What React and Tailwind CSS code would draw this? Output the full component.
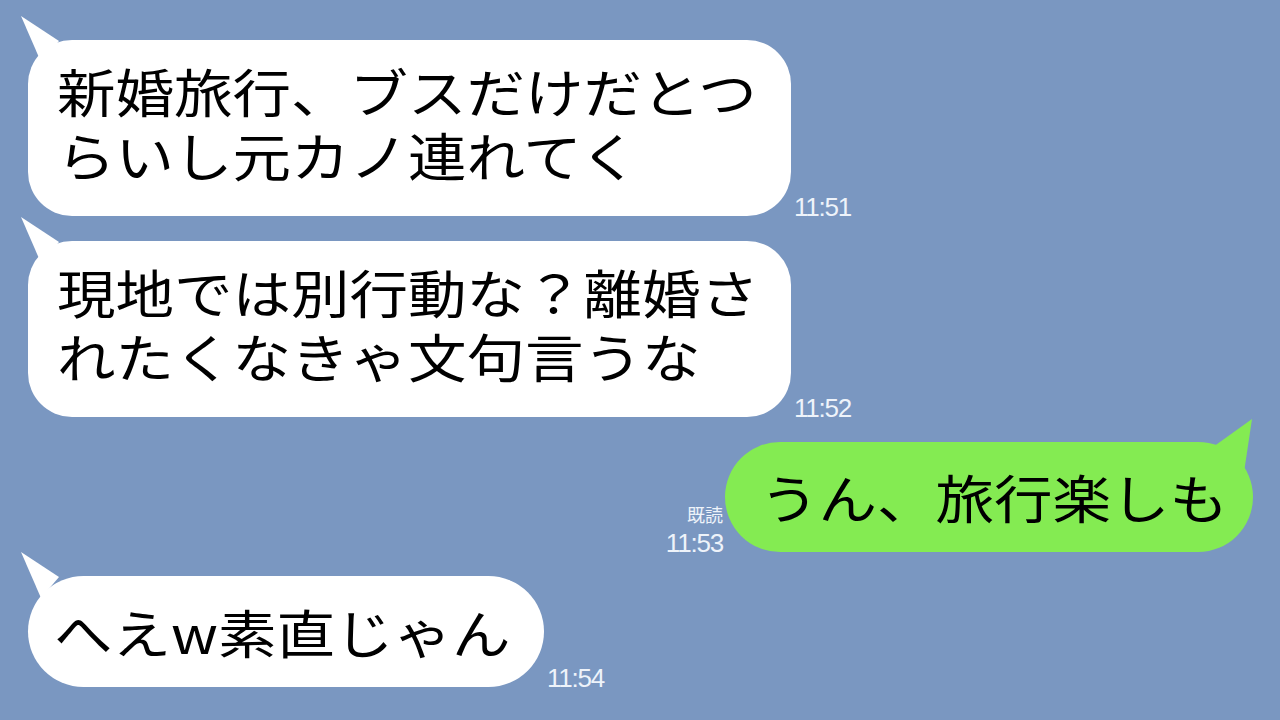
import React from "react";

const JP = { fontFamily: '"Noto Sans CJK JP", "Noto Sans", sans-serif' };
const TIME = { fontFamily: '"Liberation Sans", Arial, sans-serif' };

const LeftTail = () => (
  <svg className="absolute left-[-7px] top-[-24px]" width="40" height="50" viewBox="0 0 40 50">
    <polygon points="0,0 20,46 38,25" fill="#ffffff" />
  </svg>
);

const Stamp = ({ children, read }) => (
  <div className="flex flex-col items-end leading-none text-[#eef3fa]">
    {read && (
      <span className="text-[18px] mb-[7px]" style={JP}>
        既読
      </span>
    )}
    <span className="text-[26px] tracking-[-1.2px] mb-[-4px]" style={TIME}>
      {children}
    </span>
  </div>
);

const LeftMsg = ({ lines, time }) => (
  <div className="flex items-end gap-[3px]">
    <div
      className="relative bg-white rounded-[44px] w-[763px] pl-[29px] pt-[19px] pb-[29px] text-black text-[52px] leading-[64px]"
      style={JP}
    >
      <LeftTail />
      {lines.map((l, i) => (
        <div key={i} className="whitespace-nowrap relative origin-left scale-x-[1.125]">
          {l}
        </div>
      ))}
    </div>
    <Stamp>{time}</Stamp>
  </div>
);

export default function App() {
  return (
    <div className="w-[1280px] h-[720px] bg-[#7a97c1] overflow-hidden flex flex-col gap-[25px] pt-[40px] pl-[28px] pr-[27px]">
      <LeftMsg lines={["新婚旅行、ブスだけだとつ", "らいし元カノ連れてく"]} time="11:51" />
      <LeftMsg lines={["現地では別行動な？離婚さ", "れたくなきゃ文句言うな"]} time="11:52" />
      <div className="flex items-end justify-end gap-[2px]">
        <Stamp read>11:53</Stamp>
        <div
          className="relative bg-[#84eb52] rounded-full h-[110px] w-[528px] flex items-center pl-[35px] text-black text-[52px]"
          style={JP}
        >
          <svg className="absolute right-[-6px] top-[-23px]" width="46" height="62" viewBox="0 0 46 62">
            <polygon points="39,0 0,28 30,60" fill="#84eb52" />
          </svg>
          <span className="relative whitespace-nowrap origin-left scale-x-[1.125]">うん、旅行楽しも</span>
        </div>
      </div>
      <div className="flex items-end gap-[3px] -mt-[1px]">
        <div
          className="relative bg-white rounded-full h-[111px] w-[516px] flex items-center pl-[26px] text-black text-[52px]"
          style={JP}
        >
          <LeftTail />
          <span className="relative whitespace-nowrap origin-left scale-x-[1.125]">へえw素直じゃん</span>
        </div>
        <Stamp>11:54</Stamp>
      </div>
    </div>
  );
}
